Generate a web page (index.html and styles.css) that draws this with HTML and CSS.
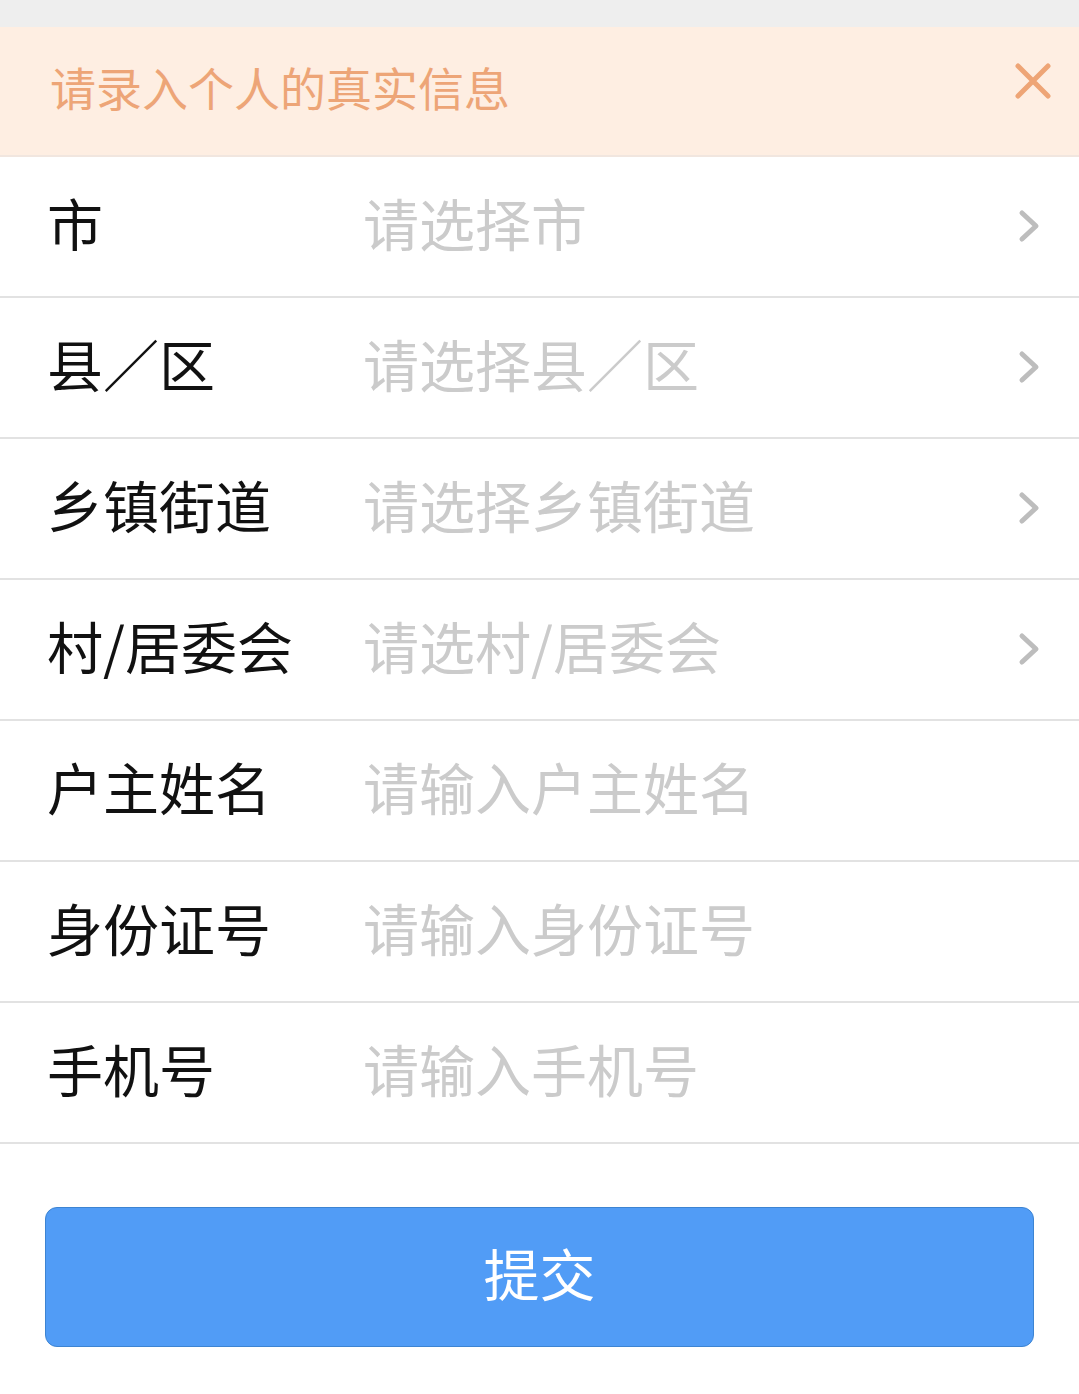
FILE: index.html
```html
<html>
  <head>
    <meta charset="utf-8">
    <link rel="stylesheet" href="styles.css">
  </head>

  <body class="page">
    <div class="status-strip"></div>

    <div class="notice">
      <div class="notice-text">请录入个人的真实信息</div>
      <svg class="notice-close" viewBox="0 0 36 36" width="36" height="36">
        <path d="M3 3 L33 33 M33 3 L3 33" stroke="#eea576" stroke-width="5" stroke-linecap="round" fill="none"/>
      </svg>
    </div>

    <div class="form">
      <div class="form-row">
        <div class="form-label">市</div>
        <div class="form-value">请选择市</div>
        <svg class="chevron" viewBox="0 0 24 34" width="24" height="34"><path d="M5 4 L19 17 L5 30" stroke="#bdbdbd" stroke-width="5" fill="none" stroke-linecap="round" stroke-linejoin="round"/></svg>
      </div>
      <div class="form-row">
        <div class="form-label">县／区</div>
        <div class="form-value">请选择县／区</div>
        <svg class="chevron" viewBox="0 0 24 34" width="24" height="34"><path d="M5 4 L19 17 L5 30" stroke="#bdbdbd" stroke-width="5" fill="none" stroke-linecap="round" stroke-linejoin="round"/></svg>
      </div>
      <div class="form-row">
        <div class="form-label">乡镇街道</div>
        <div class="form-value">请选择乡镇街道</div>
        <svg class="chevron" viewBox="0 0 24 34" width="24" height="34"><path d="M5 4 L19 17 L5 30" stroke="#bdbdbd" stroke-width="5" fill="none" stroke-linecap="round" stroke-linejoin="round"/></svg>
      </div>
      <div class="form-row">
        <div class="form-label">村/居委会</div>
        <div class="form-value">请选村/居委会</div>
        <svg class="chevron" viewBox="0 0 24 34" width="24" height="34"><path d="M5 4 L19 17 L5 30" stroke="#bdbdbd" stroke-width="5" fill="none" stroke-linecap="round" stroke-linejoin="round"/></svg>
      </div>
      <div class="form-row">
        <div class="form-label">户主姓名</div>
        <div class="form-value">请输入户主姓名</div>
      </div>
      <div class="form-row">
        <div class="form-label">身份证号</div>
        <div class="form-value">请输入身份证号</div>
      </div>
      <div class="form-row">
        <div class="form-label">手机号</div>
        <div class="form-value">请输入手机号</div>
      </div>
    </div>

    <div class="actions">
      <div class="submit-btn">提交</div>
    </div>
  </body>
</html>
```

FILE: styles.css
```css
html, body {
  margin: 0;
  padding: 0;
}
.page {
  background: #ffffff;
  font-family: "Noto Sans CJK SC", "Noto Sans", sans-serif;
  width: 1079px;
}
.status-strip {
  height: 27px;
  background: #eeeeee;
}

/* orange hint bar with close button */
.notice {
  height: 128px;
  background: #feeee2;
  border-bottom: 2px solid #f1e6df;
  display: flex;
  align-items: center;
  justify-content: space-between;
  padding: 0 28px 0 50px;
}
.notice-text {
  font-size: 46px;
  color: #eda577;
  line-height: 1;
  margin-top: -10px;
}
.notice-close {
  display: block;
  margin-top: -20px;
}

/* form rows: label | placeholder | chevron */
.form-row {
  box-sizing: border-box;
  height: 141px;
  border-bottom: 2px solid #e2e2e2;
  display: flex;
  align-items: center;
  padding: 0 38px 10px 47px;
}
.form-label {
  width: 316px;
  flex-shrink: 0;
  font-size: 56px;
  line-height: 1;
  color: #111111;
}
.form-value {
  flex: 1;
  font-size: 56px;
  line-height: 1;
  color: #cbcbcb;
}
.chevron {
  display: block;
  margin-top: 8px;
}

.actions {
  padding: 63px 45px 0 45px;
}
.submit-btn {
  box-sizing: border-box;
  height: 140px;
  background: #519cf6;
  border: 1px solid #3d84d2;
  border-radius: 12px;
  color: #ffffff;
  font-size: 56px;
  line-height: 1;
  display: flex;
  align-items: center;
  justify-content: center;
  padding-bottom: 10px;
}
```
